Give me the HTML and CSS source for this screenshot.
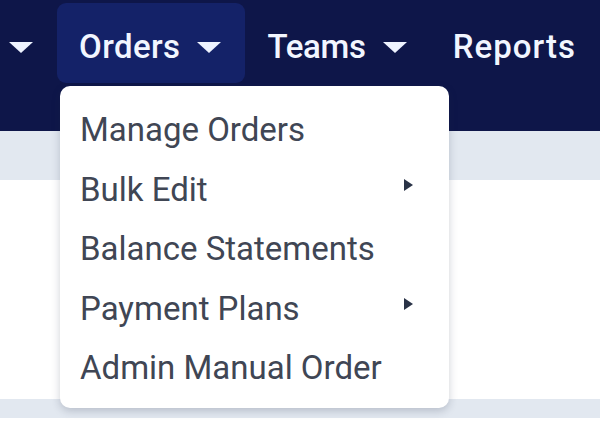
FILE: index.html
```html
<!DOCTYPE html>
<html>
<head>
<meta charset="utf-8">
<link rel="stylesheet" href="styles.css">
</head>
<body>
<header class="topbar">
  <nav class="nav">
    <div class="nav-item nav-item--cut"><span class="caret"></span></div>
    <div class="nav-item nav-item--active"><span class="nav-label">Orders</span><span class="caret"></span></div>
    <div class="nav-item"><span class="nav-label nav-label--tight">Teams</span><span class="caret"></span></div>
    <div class="nav-item"><span class="nav-label nav-label--wide">Reports</span></div>
  </nav>
</header>
<div class="subbar"></div>
<main class="content"></main>
<div class="band"></div>

<div class="dropdown">
  <div class="dd-item">Manage Orders</div>
  <div class="dd-item dd-item--sub">Bulk Edit<span class="sub-arrow"></span></div>
  <div class="dd-item">Balance Statements</div>
  <div class="dd-item dd-item--sub">Payment Plans<span class="sub-arrow"></span></div>
  <div class="dd-item">Admin Manual Order</div>
</div>
</body>
</html>
```

FILE: styles.css
```css
* { box-sizing: border-box; }
html, body {
  margin: 0;
  padding: 0;
  width: 600px;
  height: 448px;
  overflow: hidden;
  background: #ffffff;
  font-family: Roboto, "Noto Sans", sans-serif;
}
.topbar {
  height: 131px;
  background: #0e1649;
  padding-top: 3px;
}
.nav {
  display: flex;
  height: 80px;
}
.nav-item {
  display: flex;
  align-items: center;
  gap: 17px;
  padding: 8px 24px 0 22px;
  border-radius: 9px;
  color: #f2f6ff;
  font-size: 33px;
  font-weight: 500;
  white-space: nowrap;
}
.nav-item--cut {
  padding-left: 9px;
}
.nav-item--active {
  background: #142268;
}
.nav-label {
  line-height: 1;
  padding-bottom: 2px;
  letter-spacing: 0.4px;
}
.nav-label--tight {
  letter-spacing: -0.3px;
}
.nav-label--wide {
  letter-spacing: 1px;
}
.caret {
  width: 0;
  height: 0;
  border-left: 12px solid transparent;
  border-right: 12px solid transparent;
  border-top: 11px solid #eef3ff;
}
.subbar {
  height: 49px;
  background: #e2e8f0;
}
.content {
  height: 219px;
  background: #ffffff;
}
.band {
  height: 19px;
  background: #e2e8f0;
}
.dropdown {
  position: absolute;
  left: 60px;
  top: 86px;
  width: 389px;
  height: 322px;
  background: #ffffff;
  border-radius: 10px;
  box-shadow: 0 3px 8px rgba(30, 40, 70, 0.22);
  padding: 14px 36px 10px 20px;
  display: flex;
  flex-direction: column;
}
.dd-item {
  height: 59.5px;
  display: flex;
  align-items: center;
  justify-content: space-between;
  font-size: 33px;
  color: #404654;
  white-space: nowrap;
}
.sub-arrow {
  width: 0;
  height: 0;
  border-top: 6.5px solid transparent;
  border-bottom: 6.5px solid transparent;
  border-left: 9px solid #2a3347;
  margin-bottom: 8px;
}
```
